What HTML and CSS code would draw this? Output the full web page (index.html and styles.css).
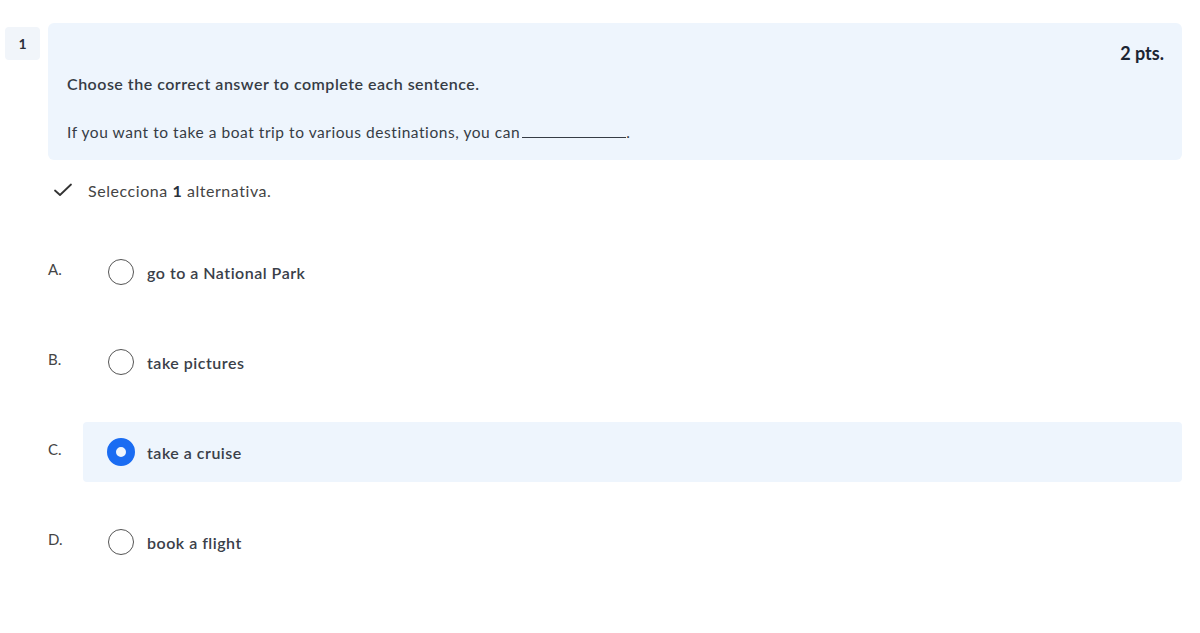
FILE: index.html
```html
<!DOCTYPE html>
<html lang="es">
  <head>
    <meta charset="UTF-8" />
    <meta name="viewport" content="width=device-width, initial-scale=1.0" />
    <title>Pregunta 1</title>
    <link rel="stylesheet" href="styles.css">
  </head>

  <body>
    <div class="question">
      <!-- numero + enunciado -->
      <div class="question-head">
        <div class="number">1</div>
        <div class="card">
          <div class="points">2 pts.</div>
          <p class="prompt">Choose the correct answer to complete each sentence.</p>
          <p class="sentence">If you want to take a boat trip to various destinations, you can<span class="blank"></span>.</p>
        </div>
      </div>

      <div class="hint">
        <svg class="check" width="20" height="14" viewBox="0 0 20 14">
          <path d="M2 7.5 L7 12 L18 1.5" fill="none" stroke="#333" stroke-width="1.8" stroke-linecap="round" stroke-linejoin="round" />
        </svg>
        <span>Selecciona <b>1</b> alternativa.</span>
      </div>

      <!-- alternativas -->
      <ul class="options">
        <li class="option">
          <span class="letter">A.</span>
          <div class="choice"><span class="radio"></span><span class="label">go to a National Park</span></div>
        </li>
        <li class="option">
          <span class="letter">B.</span>
          <div class="choice"><span class="radio"></span><span class="label">take pictures</span></div>
        </li>
        <li class="option">
          <span class="letter">C.</span>
          <div class="choice selected"><span class="radio"></span><span class="label">take a cruise</span></div>
        </li>
        <li class="option">
          <span class="letter">D.</span>
          <div class="choice"><span class="radio"></span><span class="label">book a flight</span></div>
        </li>
      </ul>
    </div>
  </body>
</html>
```

FILE: styles.css
```css
*,
*::after,
*::before {
  padding: 0;
  margin: 0;
  box-sizing: border-box;
}
:root {
  --card-bg: #eef5fd;
  --text: #363c45;
  --blue: #1a6cf2;
}
body {
  font-family: Lato, "Noto Sans", sans-serif;
  color: var(--text);
  background: #fff;
}
.question {
  padding: 23px 18px 0 5px;
}

/* cabecera */
.question-head {
  display: flex;
  align-items: flex-start;
  gap: 8px;
}
.number {
  width: 35px;
  height: 33px;
  margin-top: 4px;
  border-radius: 4px;
  background: #f1f5fa;
  display: flex;
  align-items: center;
  justify-content: center;
  font-size: 14px;
  font-weight: 700;
  color: #2a313b;
}
.card {
  flex: 1;
  background: var(--card-bg);
  border-radius: 6px;
  padding: 18px 18px 18px 19px;
}
.points {
  text-align: right;
  font-size: 18px;
  line-height: 24px;
  font-weight: 700;
  color: #1b2433;
}
.prompt {
  margin-top: 9px;
  font-size: 16px;
  line-height: 20px;
  font-weight: 600;
  letter-spacing: 0.5px;
}
.sentence {
  margin-top: 28px;
  font-size: 15.5px;
  line-height: 20px;
  letter-spacing: 0.55px;
}
.blank {
  display: inline-block;
  width: 104px;
  margin-left: 2px;
  border-bottom: 1px solid var(--text);
}

/* indicacion */
.hint {
  display: flex;
  align-items: center;
  height: 20px;
  margin-top: 20px;
  margin-left: 47px;
  font-size: 16px;
  letter-spacing: 0.55px;
  color: #444;
}
.check {
  margin-left: 1px;
  margin-right: 15px;
}
.hint b {
  font-weight: 700;
  color: #2a313b;
}

/* alternativas */
.options {
  list-style: none;
  margin-top: 42px;
  margin-left: 43px;
  display: flex;
  flex-direction: column;
  gap: 30px;
}
.option {
  display: flex;
  align-items: center;
  height: 60px;
}
.letter {
  width: 35px;
  margin-top: -6px;
  font-size: 15px;
  color: #444;
}
.choice {
  flex: 1;
  height: 100%;
  display: flex;
  align-items: center;
  gap: 13px;
  padding-left: 25px;
  border-radius: 4px;
}
.radio {
  width: 26px;
  height: 26px;
  border-radius: 50%;
  border: 1.5px solid #555;
}
.label {
  font-size: 16px;
  font-weight: 600;
  letter-spacing: 0.5px;
  color: #3a4049;
}
.choice.selected {
  background: var(--card-bg);
}
.choice.selected .radio {
  width: 28px;
  height: 28px;
  margin: 0 -1px;
  border: 9px solid var(--blue);
}
```
